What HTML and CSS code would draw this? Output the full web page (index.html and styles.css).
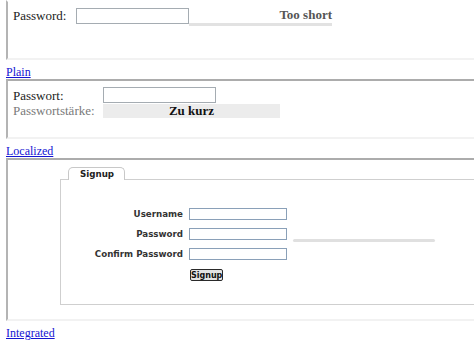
FILE: index.html
```html
<!DOCTYPE html>
<html lang="en">

<head>
    <meta charset="UTF-8">
    <meta name="viewport" content="width=device-width, initial-scale=1.0">
    <title>Password Strength Meter Demos</title>
    <link rel="stylesheet" href="styles.css">
</head>

<body>
    <div class="frame first">
        <div class="plain-row">
            <label class="plain-label" for="pw-plain">Password:</label>
            <input type="password" class="field" id="pw-plain">
            <div class="meter">
                <span class="meter-text">Too short</span>
                <span class="meter-bar"></span>
            </div>
        </div>
    </div>
    <a class="demo-link" href="#">Plain</a>

    <div class="frame">
        <div class="local-grid">
            <label class="local-label" for="pw-local">Passwort:</label>
            <input type="password" class="field" id="pw-local">
            <span class="local-label muted">Passwortstärke:</span>
            <span class="local-meter">Zu kurz</span>
        </div>
    </div>
    <a class="demo-link" href="#">Localized</a>

    <div class="frame tall">
        <div class="tab">Signup</div>
        <div class="panel">
            <div class="signup-grid">
                <label class="signup-label" for="username">Username</label>
                <div class="cell"><input type="text" class="field small" id="username"></div>

                <label class="signup-label" for="password">Password</label>
                <div class="cell">
                    <input type="password" class="field small" id="password">
                    <span class="signup-meter"></span>
                </div>

                <label class="signup-label" for="confirm">Confirm Password</label>
                <div class="cell"><input type="password" class="field small" id="confirm"></div>

                <span></span>
                <div class="cell"><button class="signup-button">Signup</button></div>
            </div>
        </div>
    </div>
    <a class="demo-link" href="#">Integrated</a>
</body>

</html>
```

FILE: styles.css
```css
* {
    box-sizing: border-box;
}

body {
    margin: 0 0 0 6px;
    font-family: 'Liberation Serif', serif;
    font-size: 13px;
    color: #222;
    background: #fff;
}

.frame {
    height: 60px;
    border-top: 2px solid #acacac;
    border-left: 2px solid #b4b4b4;
    border-bottom: 2px solid #f2f2f2;
    padding: 6px 0 0 5px;
}

.frame.first {
    border-top-color: #fff;
}

.frame.tall {
    height: 163px;
    padding: 7px 0 0 52px;
}

.demo-link {
    display: block;
    width: max-content;
    height: 19px;
    padding-top: 5px;
    line-height: 14px;
    font-size: 12px;
    color: #1414d2;
    text-decoration: underline;
}

.field {
    width: 113px;
    height: 16px;
    margin: 0;
    padding: 0 2px;
    border: 1px solid #a5acb2;
    background: #fff;
    outline: none;
}

/* plain */
.plain-row {
    display: flex;
    align-items: flex-start;
}

.plain-label {
    width: 63px;
    line-height: 15px;
}

.meter {
    display: flex;
    flex-direction: column;
    width: 143px;
}

.meter-text {
    text-align: right;
    font-weight: bold;
    color: #555;
    line-height: 14px;
}

.meter-bar {
    height: 3px;
    margin-top: 1px;
    background: #e2e2e2;
}

/* localized */
.local-grid {
    display: grid;
    grid-template-columns: 90px 177px;
    align-items: center;
}

.local-label {
    line-height: 15px;
}

.local-label.muted {
    color: #7a7a7a;
}

.local-meter {
    height: 14px;
    line-height: 14px;
    text-align: center;
    font-weight: bold;
    color: #111;
    background: #ececec;
}

/* integrated */
.tab {
    width: 57px;
    height: 13px;
    margin-left: 8px;
    margin-bottom: -1px;
    padding-left: 11px;
    position: relative;
    border: 1px solid #c8c8c8;
    border-bottom: none;
    border-radius: 5px 5px 0 0;
    background: #fff;
    font-family: 'DejaVu Sans', Verdana, sans-serif;
    font-size: 8.7px;
    font-weight: bold;
    line-height: 12px;
    color: #222;
}

.panel {
    height: 126px;
    border: 1px solid #cfcfcf;
    border-right: none;
    padding-top: 24px;
}

.signup-grid {
    display: grid;
    grid-template-columns: 122px auto;
    grid-auto-rows: 20px;
    column-gap: 6px;
}

.signup-label {
    text-align: right;
    line-height: 20px;
    font-family: 'DejaVu Sans', Verdana, sans-serif;
    font-size: 8.7px;
    font-weight: bold;
    color: #333;
}

.cell {
    display: flex;
    align-items: flex-start;
}

.field.small {
    width: 98px;
    height: 12px;
    margin-top: 4px;
    border-color: #8aa0b8;
}

.signup-meter {
    width: 142px;
    height: 3px;
    margin: 15px 0 0 6px;
    border-radius: 2px;
    background: #e0e0e0;
}

.signup-button {
    margin: 5px 0 0 1px;
    padding: 0;
    height: 12px;
    border: 1px solid #2a2a2a;
    border-radius: 2px;
    background: #e4e4e4;
    font-family: 'DejaVu Sans', Verdana, sans-serif;
    font-size: 8px;
    font-weight: bold;
    line-height: 9px;
    color: #111;
    cursor: pointer;
}
```
